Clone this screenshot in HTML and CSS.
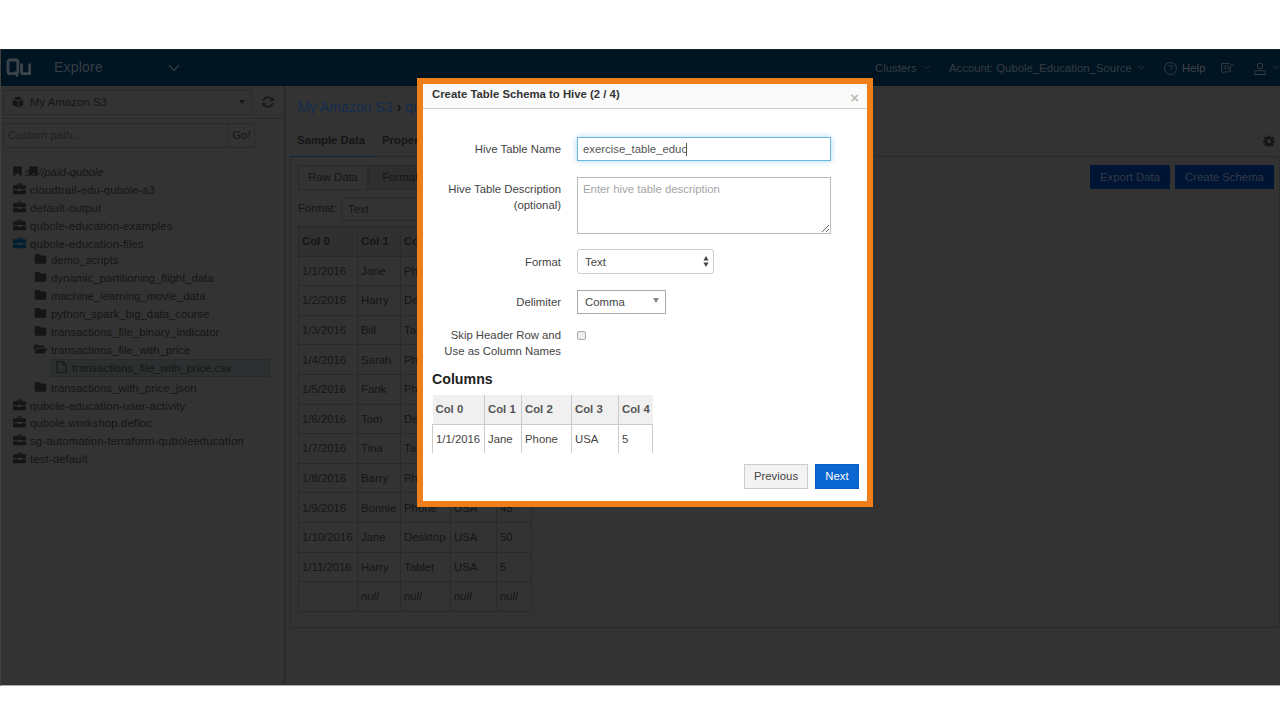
FILE: index.html
```html
<!DOCTYPE html>
<html lang="en">
<head>
  <meta charset="UTF-8">
  <meta name="viewport" content="width=device-width, initial-scale=1.0"/>
  <title>Explore - Create Table Schema to Hive</title>
  <link rel="stylesheet" href="styles.css">
</head>
<body>
  <!-- Icon set -->
  <svg class="sprite" aria-hidden="true">
    <symbol id="i-case" viewBox="0 0 13 12">
      <path d="M4 2.2V1.4Q4 .5 5 .5h3q1 0 1 .9v.8h-1.2v-.6H5.200v.6z"/>
      <path d="M1 2.300h11q1 0 1 1v2.900H8v-.5H5v.5H0V3.300q0-1 1-1zM0 7.200h5v.9h3v-.9h5v3.200q0 .8-1 .8H1q-1 0-1-.8z"/>
    </symbol>
    <symbol id="i-folder" viewBox="0 0 13 12">
      <path d="M.8 2q0-1 1-1h3q1 0 1 1v.5h5.400q1 0 1 1V9.800q0 1-1 1H1.800q-1 0-1-1z"/>
    </symbol>
    <symbol id="i-folder-open" viewBox="0 0 13 12">
      <path d="M0 8.500V2.400q0-1 1-1h2.800q.9 0 .9 1h4.800q1 0 1 1v1.100H4.200q-1 0-1.700.8z"/>
      <path d="M4.200 5.500h8.300q.8 0 .4.700L10.800 9.700q-.4.700-1.300.7H.9q-.8 0-.3-.7l2.300-3.500q.4-.7 1.300-.7z"/>
    </symbol>
    <symbol id="i-file" viewBox="0 0 12 13">
      <path d="M1 .6h6.500L11 4.100v8.300H1zM7.400.8v3.500H11" fill="none" stroke="currentColor"/>
    </symbol>
    <symbol id="i-bookmark" viewBox="0 0 9 11">
      <path d="M.3.5h8.400v10.200L4.500 7 .3 10.700z"/>
    </symbol>
    <symbol id="i-cube" viewBox="0 0 12 12">
      <path d="M6 .6l4.700 2L6 4.600 1.300 2.600zM.8 3.500l4.700 2v5.900L.8 9zM11.200 3.500l-4.700 2v5.900L11.200 9z"/>
    </symbol>
    <symbol id="i-refresh" viewBox="0 0 12 12">
      <path d="M1.300 5A4.600 4.600 0 0 1 9.800 3.400M10.700 7A4.600 4.600 0 0 1 2.200 8.600" fill="none" stroke="currentColor" stroke-width="1.400"/>
      <path d="M11.500 1.200v3.800H7.700zM.5 10.800V7h3.800z"/>
    </symbol>
    <symbol id="i-down" viewBox="0 0 12 8">
      <path d="M1 1.200l5 5 5-5" fill="none" stroke="currentColor" stroke-width="1.400"/>
    </symbol>
    <symbol id="i-gear" viewBox="0 0 12 12">
      <path fill-rule="evenodd" d="M5 .5h2l.3 1.500 1 .4L9.500 1.500 11 3l-.9 1.200.4 1 1.300.3v2l-1.300.3-.4 1L11 10l-1.500 1.300-1.200-.8-1 .4L7 12H5l-.3-1.100-1-.4-1.200.8L1 10l.9-1.200-.4-1L.2 7.500v-2l1.300-.3.4-1L1 3l1.500-1.500 1.200.9 1-.4zM6 4.200a2 2 0 1 0 0 4.100 2 2 0 1 0 0-4.100z"/>
    </symbol>
    <symbol id="i-note" viewBox="0 0 14 12">
      <path d="M9.500 1.500H1.500v8.300h1.700V11.300l2-1.500h5.300V6.500M3.500 4.100h4.300M3.500 6.300h3M7.800 7l.5-1.500L12 1.600l1.100 1L9.300 6.500z" fill="none" stroke="currentColor" stroke-width=".9"/>
    </symbol>
    <symbol id="i-user" viewBox="0 0 12 14">
      <circle cx="6" cy="4" r="2.800" fill="none" stroke="currentColor"/>
      <path d="M.8 12.500v-1.600Q.8 8.700 3 8.700h6q2.200 0 2.200 2.200v1.600z" fill="none" stroke="currentColor"/>
    </symbol>
  </svg>

  <div class="screen">
    <!-- Top bar -->
    <header class="top-bar">
      <svg class="logo" viewBox="0 0 26 20">
        <path d="M9.200 15.700H5q-2 0-2-2V4q0-2 2-2h5.800q2 0 2 2v9.700q0 1.300-.8 1.900M9.500 13.800l3 4.400"/>
        <path d="M16.500 5.500v8.200q0 2 2 2h6.200V5.500"/>
      </svg>
      <span class="app-name">Explore</span>
      <svg class="app-arrow"><use href="#i-down"/></svg>
      <nav class="top-nav">
        <span class="nav-clusters">Clusters</span>
        <svg class="nav-arrow"><use href="#i-down"/></svg>
        <span class="nav-account">Account: Qubole_Education_Source</span>
        <svg class="nav-arrow"><use href="#i-down"/></svg>
        <span class="help-icon">?</span>
        <span class="nav-help">Help</span>
        <svg class="note"><use href="#i-note"/></svg>
        <svg class="user"><use href="#i-user"/></svg>
        <svg class="nav-arrow last"><use href="#i-down"/></svg>
      </nav>
    </header>

    <div class="body">
      <!-- Sidebar -->
      <aside class="sidebar">
        <div class="store-row">
          <div class="store">
            <svg class="ico"><use href="#i-cube"/></svg>
            <span class="store-name">My Amazon S3</span>
            <i class="tri"></i>
          </div>
          <svg class="refresh"><use href="#i-refresh"/></svg>
        </div>
        <div class="path-row">
          <div class="path">Custom path...</div>
          <div class="go">Go!</div>
        </div>

        <ul class="tree">
          <li class="mark"><svg class="bm"><use href="#i-bookmark"/></svg><em>s3<svg class="bm over"><use href="#i-bookmark"/></svg>//paid-qubole</em></li>
          <li><svg class="ico"><use href="#i-case"/></svg><span>cloudtrail-edu-qubole-s3</span></li>
          <li><svg class="ico"><use href="#i-case"/></svg><span>default-output</span></li>
          <li><svg class="ico"><use href="#i-case"/></svg><span>qubole-education-examples</span></li>
          <li class="open"><svg class="ico"><use href="#i-case"/></svg><span>qubole-education-files</span>
            <ul>
              <li><svg class="ico"><use href="#i-folder"/></svg><span>demo_scripts</span></li>
              <li><svg class="ico"><use href="#i-folder"/></svg><span>dynamic_partitioning_flight_data</span></li>
              <li><svg class="ico"><use href="#i-folder"/></svg><span>machine_learning_movie_data</span></li>
              <li><svg class="ico"><use href="#i-folder"/></svg><span>python_spark_big_data_course</span></li>
              <li><svg class="ico"><use href="#i-folder"/></svg><span>transactions_file_binary_indicator</span></li>
              <li><svg class="ico"><use href="#i-folder-open"/></svg><span>transactions_file_with_price</span></li>
              <li class="selected"><svg class="ico"><use href="#i-file"/></svg><span>transactions_file_with_price.csv</span></li>
              <li><svg class="ico"><use href="#i-folder"/></svg><span>transactions_with_price_json</span></li>
            </ul>
          </li>
          <li><svg class="ico"><use href="#i-case"/></svg><span>qubole-education-user-activity</span></li>
          <li><svg class="ico"><use href="#i-case"/></svg><span>qubole.workshop.defloc</span></li>
          <li><svg class="ico"><use href="#i-case"/></svg><span>sg-automation-terraform-quboleeducation</span></li>
          <li><svg class="ico"><use href="#i-case"/></svg><span>test-default</span></li>
        </ul>
      </aside>

      <!-- Main content -->
      <main class="main">
        <div class="crumbs"><a>My Amazon S3</a> <b>›</b> <a>qubole</a></div>
        <div class="tabs">
          <div class="tab active">Sample Data</div>
          <div class="tab">Properties</div>
          <svg class="gear"><use href="#i-gear"/></svg>
        </div>
        <section class="panel">
          <div class="tools">
            <div class="toggle">Raw Data</div>
            <div class="toggle on">Formatted</div>
            <div class="btn-dim push">Export Data</div>
            <div class="btn-dim schema">Create Schema</div>
          </div>
          <div class="format-row">
            <span>Format:</span>
            <div class="format-select">Text</div>
          </div>
          <table class="data">
            <colgroup><col class="c0"><col class="c1"><col class="c2"><col class="c3"><col class="c4"></colgroup>
            <tr><th>Col 0</th><th>Col 1</th><th>Col 2</th><th>Col 3</th><th>Col 4</th></tr>
            <tr><td>1/1/2016</td><td>Jane</td><td>Phone</td><td>USA</td><td>5</td></tr>
            <tr><td>1/2/2016</td><td>Harry</td><td>Desktop</td><td>USA</td><td>10</td></tr>
            <tr><td>1/3/2016</td><td>Bill</td><td>Tablet</td><td>USA</td><td>15</td></tr>
            <tr><td>1/4/2016</td><td>Sarah</td><td>Phone</td><td>USA</td><td>20</td></tr>
            <tr><td>1/5/2016</td><td>Fank</td><td>Phone</td><td>USA</td><td>25</td></tr>
            <tr><td>1/6/2016</td><td>Tom</td><td>Desktop</td><td>USA</td><td>30</td></tr>
            <tr><td>1/7/2016</td><td>Tina</td><td>Tablet</td><td>USA</td><td>35</td></tr>
            <tr><td>1/8/2016</td><td>Barry</td><td>Phone</td><td>USA</td><td>40</td></tr>
            <tr><td>1/9/2016</td><td>Bonnie</td><td>Phone</td><td>USA</td><td>45</td></tr>
            <tr><td>1/10/2016</td><td>Jane</td><td>Desktop</td><td>USA</td><td>50</td></tr>
            <tr><td>1/11/2016</td><td>Harry</td><td>Tablet</td><td>USA</td><td>5</td></tr>
            <tr class="null"><td></td><td>null</td><td>null</td><td>null</td><td>null</td></tr>
          </table>
        </section>
      </main>
    </div>
  </div>

  <!-- Create schema dialog -->
  <div class="modal">
    <div class="modal-head">
      <h3>Create Table Schema to Hive (2 / 4)</h3>
      <span class="close">×</span>
    </div>
    <div class="modal-body">
      <div class="field name-field">
        <label>Hive Table Name</label>
        <div class="input">exercise_table_educ<i class="caret"></i></div>
      </div>
      <div class="field desc-field">
        <label>Hive Table Description<br>(optional)</label>
        <textarea placeholder="Enter hive table description"></textarea>
      </div>
      <div class="field format-field">
        <label>Format</label>
        <div class="select">Text
          <svg class="updown" viewBox="0 0 6 12"><path d="M3 0l2.800 5H.2zM3 12L.2 7h5.600z"/></svg>
        </div>
      </div>
      <div class="field delim-field">
        <label>Delimiter</label>
        <div class="combo">Comma <i class="tri"></i></div>
      </div>
      <div class="field skip-field">
        <label>Skip Header Row and<br>Use as Column Names</label>
        <span class="check"></span>
      </div>
      <h4>Columns</h4>
      <div class="preview">
        <table>
          <colgroup><col class="p0"><col class="p1"><col class="p2"><col class="p3"><col class="p4"></colgroup>
          <tr><th>Col 0</th><th>Col 1</th><th>Col 2</th><th>Col 3</th><th>Col 4</th></tr>
          <tr><td>1/1/2016</td><td>Jane</td><td>Phone</td><td>USA</td><td>5</td></tr>
        </table>
      </div>
    </div>
    <div class="modal-foot">
      <button class="btn">Previous</button>
      <button class="btn btn-primary">Next</button>
    </div>
  </div>
</body>
</html>
```
FILE: styles.css
```css
/* --- Vars and reset --- */
:root {
  --bg: #333333;
  --bar: #001422;
  --ink: #151515;
  --line: #2a2a2a;
  --link: #132c4e;
  --orange: #ef7f1a;
  --blue: #0a66d0;
  --font: "Liberation Sans", Arial, sans-serif;
}
* { box-sizing: border-box; margin: 0; padding: 0; }
body {
  position: relative;
  width: 1280px;
  height: 720px;
  padding-top: 49px;
  overflow: hidden;
  background: white;
  font-family: var(--font);
  font-size: 11.35px;
  color: var(--ink);
}
svg { fill: currentColor; flex: none; }
ul { list-style: none; }
.sprite { position: absolute; width: 0; height: 0; }
.screen {
  height: 637px;
  background: var(--bg);
  border-left: 1px solid #3f3f3f;
  border-bottom: 1px solid #aaa;
  overflow: hidden;
}

/* --- Top bar --- */
.top-bar {
  display: flex;
  align-items: center;
  height: 37px;
  padding: 0 0 1px 4px;
  background: var(--bar);
  border-top: 1px solid #14242e;
  color: #353d43;
}
.logo { width: 26px; height: 20px; fill: none; stroke: #3c454b; stroke-width: 2.8; }
.app-name { width: 115px; margin-left: 23px; padding-bottom: 1px; font-size: 14px; letter-spacing: 0.2px; }
.app-arrow { width: 12px; height: 8px; }
.top-nav { display: flex; align-items: center; margin-left: 695px; white-space: nowrap; }
.top-nav span { flex: none; }
.nav-clusters { width: 48px; }
.nav-account { width: 189px; margin-left: 19px; }
.nav-arrow { width: 7px; height: 5px; }
.help-icon {
  width: 13px;
  height: 13px;
  margin: 2px 0 0 19px;
  border: 1px solid;
  border-radius: 50%;
  font-size: 9px;
  line-height: 11px;
  text-align: center;
}
.nav-help { width: 24px; margin: 1px 0 0 5px; color: #40474c; }
.note { width: 14px; height: 12px; margin-left: 14px; }
.user { width: 12px; height: 14px; margin: 2px 0 0 20px; }
.last { margin-left: 7px; }

/* --- Layout --- */
.body { display: flex; height: 599px; }

/* --- Sidebar --- */
.sidebar { width: 285px; border-right: 3px solid #2c2c2c; }
.store-row {
  display: flex;
  align-items: center;
  gap: 10px;
  height: 33px;
  padding-left: 2px;
  border-bottom: 1px solid var(--line);
}
.store {
  display: flex;
  align-items: center;
  width: 249px;
  height: 25px;
  padding: 0 6px 0 8px;
  border: 1px solid var(--line);
}
.ico { width: 13px; height: 12px; }
.store .ico { width: 12px; }
.store-name { flex: 1; margin-left: 6px; letter-spacing: 0.05px; }
.tri { border: 3px solid transparent; border-top: 4px solid currentColor; border-bottom: 0; }
.refresh { width: 12px; height: 12px; }
.path-row { display: flex; margin: 4px 0 0 2px; line-height: 23px; }
.path { width: 226px; height: 25px; padding-left: 4px; border: 1px solid var(--line); color: #202020; }
.go { width: 26px; height: 25px; border: 1px solid var(--line); border-left: 0; text-align: center; }

/* --- File tree --- */
.tree { margin-top: 16px; padding-left: 12px; line-height: 17.9px; letter-spacing: 0.13px; white-space: nowrap; }
.tree li { height: 17.9px; }
.tree .ico { margin-right: 4px; vertical-align: -1px; }
.tree ul { padding-left: 21px; margin-top: -1px; letter-spacing: 0; }
.tree .open { height: 162px; }
.mark em { margin-left: 3px; letter-spacing: 0; }
.bm { width: 9px; height: 11px; vertical-align: -1px; }
.over { margin: 0 0 0 -8px; }
.open > .ico { color: #001e30; }
.tree .selected {
  width: 219px;
  height: 18px;
  margin: -1px 0 3px 17px;
  padding-left: 3px;
  background: #2c3030;
  border: 1px solid #252a2a;
  line-height: 16px;
}

/* --- Main --- */
.main { flex: 1; padding-left: 4px; }
.crumbs { height: 41px; padding: 13px 0 0 8px; font-size: 14.1px; line-height: 17px; color: var(--ink); }
.crumbs a { color: var(--link); }
.tabs { display: flex; height: 30px; border-bottom: 1px solid var(--line); line-height: 27px; font-weight: bold; }
.tab { padding: 0 8px; }
.tab.active { width: 84px; height: 30px; padding-left: 7px; border-bottom: 1px solid #10233d; }
.gear { width: 12px; height: 12px; margin: 8px 5px 0 auto; }
.panel { height: 471px; padding: 8px 5px 0 7px; border: 1px solid var(--line); border-top: 0; }
.tools { display: flex; height: 25px; }
.toggle { width: 70px; height: 25px; border: 1px solid var(--line); text-align: center; line-height: 23px; }
.toggle.on { width: 80px; background: #2e2e2e; }
.btn-dim { width: 80px; height: 24px; background: #001433; color: #343b44; text-align: center; line-height: 25px; }
.push { margin-left: auto; }
.schema { width: 99px; margin-left: 5px; }
.format-row { display: flex; gap: 4px; margin: 7px 0 5px; line-height: 23px; }
.format-select { width: 150px; height: 24px; padding-left: 6px; border: 1px solid var(--line); border-radius: 3px; }
.data { width: 233px; table-layout: fixed; border-collapse: collapse; }
.data th, .data td {
  height: 29.6px;
  padding-left: 3px;
  border: 1px solid var(--line);
  text-align: left;
  white-space: nowrap;
}
.data th { background: #303030; }
.c0 { width: 59px; }
.c1 { width: 43px; }
.c2 { width: 50px; }
.c3 { width: 46px; }
.c4 { width: 35px; }
.null { font-style: italic; }

/* --- Modal --- */
.modal {
  position: absolute;
  left: 417px;
  top: 78px;
  width: 456px;
  height: 429px;
  border: 6px solid var(--orange);
  background: white;
  color: #444;
}
.modal-head {
  display: flex;
  justify-content: space-between;
  height: 25px;
  padding: 0 8px 0 9px;
  background: #fafafa;
  border-bottom: 1px solid #ccc;
}
.modal-head h3 { font-size: 11.35px; line-height: 21px; color: #333; }
.close { font-size: 15px; line-height: 27px; font-weight: bold; color: #bbb; }
.modal-body { height: 344px; padding-left: 9px; }
.field { display: flex; gap: 16px; }
.field label { width: 129px; text-align: right; line-height: 16px; }
.name-field { padding-top: 28px; }
.name-field label { padding-top: 4px; }
.input {
  display: flex;
  align-items: center;
  width: 254px;
  height: 24px;
  padding-left: 5px;
  border: 1px solid #6db7e0;
  box-shadow: 0 0 6px #a4d8f5;
  color: #555;
}
.caret { width: 1px; height: 13px; margin-left: -1px; background: #555; }
.desc-field { margin-top: 16px; }
.desc-field label { padding-top: 4px; }
textarea {
  width: 254px;
  height: 57px;
  padding: 5px;
  border: 1px solid #bbb;
  font: 11.35px var(--font);
}
textarea::placeholder { color: #a5a5a5; }
.format-field { margin-top: 15px; }
.format-field label { padding-top: 5px; }
.select {
  display: flex;
  align-items: center;
  justify-content: space-between;
  width: 137px;
  height: 25px;
  padding: 0 4px 0 7px;
  border: 1px solid #ccc;
  border-radius: 3px;
}
.updown { width: 6px; height: 11px; margin-bottom: 1px; }
.delim-field { margin-top: 16px; }
.delim-field label { padding-top: 4px; }
.combo {
  display: flex;
  align-items: center;
  justify-content: space-between;
  width: 89px;
  height: 24px;
  padding: 0 6px 0 7px;
  border: 1px solid #aaa;
}
.combo .tri { margin-bottom: 4px; border-top-width: 5px; color: #888; }
.skip-field { margin-top: 13px; }
.check {
  width: 9px;
  height: 9px;
  margin-top: 4px;
  border: 1px solid #aaa;
  border-radius: 2px;
  background: #eee;
}
.modal-body h4 { margin: 12px 0 7px; font-size: 14.2px; line-height: 17px; color: #222; }
.preview { height: 58px; overflow: hidden; }
.preview table { width: 220px; table-layout: fixed; border-collapse: collapse; }
.preview th, .preview td { height: 29px; padding-left: 3px; border: 1px solid #ccc; text-align: left; white-space: nowrap; }
.preview td { border-bottom: 0; }
.preview th { padding-bottom: 1px; background: #f0f0f0; border-top: 0; color: #555; }
.preview th:first-child { border-left: 0; }
.preview th:last-child { border-right: 0; }
.p0 { width: 52px; }
.p1 { width: 37px; }
.p2 { width: 50px; }
.p3 { width: 47px; }
.p4 { width: 34px; }

.modal-foot { display: flex; justify-content: flex-end; gap: 7px; padding: 11px 8px 0 0; }
.btn {
  width: 64px;
  height: 25px;
  padding-bottom: 1px;
  border: 1px solid #ccc;
  background: #f3f3f3;
  color: #444;
  font: 11.35px var(--font);
}
.btn-primary { width: 44px; border-color: #0a5cc0; background: var(--blue); color: white; }
```
